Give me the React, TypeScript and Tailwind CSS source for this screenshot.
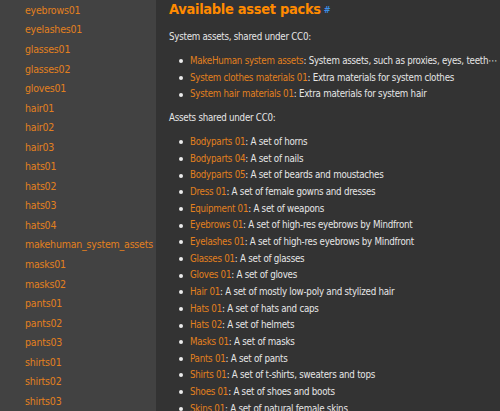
import React from "react";

const side = [
  "eyebrows01","eyelashes01","glasses01","glasses02","gloves01","hair01","hair02","hair03",
  "hats01","hats02","hats03","hats04","makehuman_system_assets","masks01","masks02",
  "pants01","pants02","pants03","shirts01","shirts02","shirts03",
];

const sys: [string, string][] = [
  ["MakeHuman system assets", "System assets, such as proxies, eyes, teeth\u22EF"],
  ["System clothes materials 01", "Extra materials for system clothes"],
  ["System hair materials 01", "Extra materials for system hair"],
];

const packs: [string, string][] = [
  ["Bodyparts 01", "A set of horns"],
  ["Bodyparts 04", "A set of nails"],
  ["Bodyparts 05", "A set of beards and moustaches"],
  ["Dress 01", "A set of female gowns and dresses"],
  ["Equipment 01", "A set of weapons"],
  ["Eyebrows 01", "A set of high-res eyebrows by Mindfront"],
  ["Eyelashes 01", "A set of high-res eyebrows by Mindfront"],
  ["Glasses 01", "A set of glasses"],
  ["Gloves 01", "A set of gloves"],
  ["Hair 01", "A set of mostly low-poly and stylized hair"],
  ["Hats 01", "A set of hats and caps"],
  ["Hats 02", "A set of helmets"],
  ["Masks 01", "A set of masks"],
  ["Pants 01", "A set of pants"],
  ["Shirts 01", "A set of t-shirts, sweaters and tops"],
  ["Shoes 01", "A set of shoes and boots"],
  ["Skins 01", "A set of natural female skins"],
];

function Item({ name, desc }: { name: string; desc: string }) {
  return (
    <li className="flex items-center h-[16.67px] whitespace-nowrap">
      <span className="w-[4px] h-[4px] rounded-full bg-[#ececec] ml-[10px] mr-[7px] shrink-0" />
      <a className="text-[#e2801e]">{name}</a>
      <span className="text-[#e6e6e6]">: {desc}</span>
    </li>
  );
}

export default function App() {
  return (
    <div
      className="flex w-[500px] h-[411px] overflow-hidden bg-[#333333]"
      style={{ fontFamily: '"DejaVu Sans Condensed", "DejaVu Sans", sans-serif' }}
    >
      <aside className="w-[156px] shrink-0 bg-[#424242]">
        <ul className="pt-[1px]">
          {side.map((s) => (
            <li key={s} className="h-[19.55px] flex items-center pl-[25px] text-[10.5px] tracking-[-0.2px] text-[#e2801e] whitespace-nowrap">
              {s}
            </li>
          ))}
        </ul>
      </aside>
      <main className="flex-1 pl-[13px] text-[9.7px] tracking-[-0.25px] text-[#e6e6e6] overflow-hidden">
        <h2 className="h-[20px] flex items-center font-bold text-[14.5px] tracking-[-0.3px] text-[#ff8a00] whitespace-nowrap">
          Available asset packs
          <span className="text-[#3b8fe8] text-[9px] tracking-normal ml-[3px] mt-[2px]">#</span>
        </h2>
        <p className="mt-[7px] h-[20px] flex items-center">System assets, shared under CC0:</p>
        <ul className="mt-[-3px] pt-[9px]">
          {sys.map(([n, d]) => (
            <Item key={n} name={n} desc={d} />
          ))}
        </ul>
        <p className="mt-[5px] h-[20px] flex items-center">Assets shared under CC0:</p>
        <ul className="pt-[6px]">
          {packs.map(([n, d]) => (
            <Item key={n} name={n} desc={d} />
          ))}
        </ul>
      </main>
    </div>
  );
}
